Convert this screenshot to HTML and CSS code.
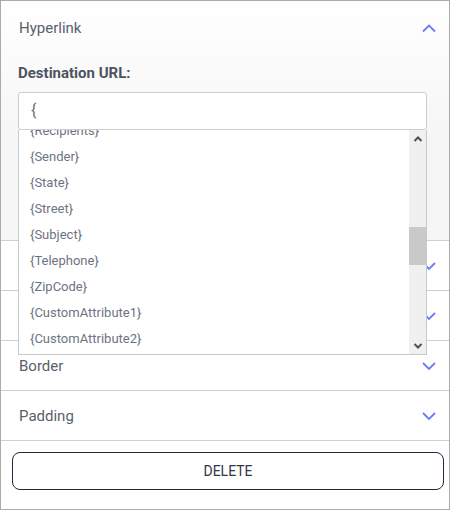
FILE: index.html
```html
<!DOCTYPE html>
<html>
<head>
<meta charset="utf-8">
<link rel="stylesheet" href="styles.css">
</head>
<body>
<div class="panel">
  <section class="sec sec-open">
    <div class="sec-head">
      <span class="sec-title">Hyperlink</span>
      <svg class="chev" width="14" height="14" viewBox="0 0 14 14"><path d="M1 10.5 L7 4.5 L13 10.5" /></svg>
    </div>
    <div class="sec-body">
      <div class="label">Destination URL:</div>
      <div class="field">
        <div class="input">{</div>
        <div class="dropdown">
          <div class="list-view">
            <ul class="items">
              <li>{Recipients}</li>
              <li>{Sender}</li>
              <li>{State}</li>
              <li>{Street}</li>
              <li>{Subject}</li>
              <li>{Telephone}</li>
              <li>{ZipCode}</li>
              <li>{CustomAttribute1}</li>
              <li>{CustomAttribute2}</li>
            </ul>
          </div>
          <div class="scrollbar">
            <div class="sb-btn"><svg width="10" height="8" viewBox="0 0 10 8"><path d="M1.5 6 L5 2.5 L8.5 6" /></svg></div>
            <div class="sb-track"><div class="sb-thumb" style="margin-top:80px;height:38px"></div></div>
            <div class="sb-btn"><svg width="10" height="8" viewBox="0 0 10 8"><path d="M1.5 2 L5 5.5 L8.5 2" /></svg></div>
          </div>
        </div>
      </div>
    </div>
  </section>
  <section class="sec">
    <div class="sec-head">
      <span class="sec-title"></span>
      <svg class="chev" width="14" height="14" viewBox="0 0 14 14"><path d="M1 4 L7 10 L13 4" /></svg>
    </div>
  </section>
  <section class="sec">
    <div class="sec-head">
      <span class="sec-title"></span>
      <svg class="chev" width="14" height="14" viewBox="0 0 14 14"><path d="M1 4 L7 10 L13 4" /></svg>
    </div>
  </section>
  <section class="sec">
    <div class="sec-head">
      <span class="sec-title">Border</span>
      <svg class="chev" width="14" height="14" viewBox="0 0 14 14"><path d="M1 4 L7 10 L13 4" /></svg>
    </div>
  </section>
  <section class="sec">
    <div class="sec-head">
      <span class="sec-title">Padding</span>
      <svg class="chev" width="14" height="14" viewBox="0 0 14 14"><path d="M1 4 L7 10 L13 4" /></svg>
    </div>
  </section>
  <div class="actions">
    <button class="btn-delete">DELETE</button>
  </div>
</div>
</body>
</html>
```

FILE: styles.css
```css
html, body {
  margin: 0;
  padding: 0;
  background: #ffffff;
}

body {
  font-family: Roboto, "Liberation Sans", sans-serif;
}

.panel {
  box-sizing: border-box;
  width: 450px;
  height: 510px;
  border: 1px solid #ababab;
  display: flex;
  flex-direction: column;
  overflow: hidden;
}

.sec {
  border-top: 1px solid #cfcfcf;
  background: #ffffff;
}

.sec-open {
  border-top: none;
  height: 239px;
  background: linear-gradient(to bottom, #ffffff 0%, #f6f6f6 55%, #f6f6f6 100%);
  display: flex;
  flex-direction: column;
}

.sec-head {
  height: 49px;
  display: flex;
  align-items: center;
  justify-content: space-between;
  padding: 0 13px 0 18px;
}

.sec-open .sec-head {
  box-sizing: border-box;
  height: 52px;
  padding-top: 2px;
}

.sec-title {
  font-size: 15px;
  color: #5a5f6c;
}

.chev {
  display: block;
  fill: none;
  stroke: #6d7cf6;
  stroke-width: 1.8;
}

.sec-body {
  padding: 11px 0 0 17px;
}

.label {
  font-size: 15px;
  line-height: 18px;
  font-weight: 700;
  color: #4d5361;
  margin-bottom: 10px;
}

.field {
  position: relative;
  width: 409px;
}

.input {
  box-sizing: border-box;
  height: 38px;
  border: 1px solid #cdcdcd;
  border-radius: 3px;
  background: #ffffff;
  font-size: 16px;
  line-height: 36px;
  padding-left: 12px;
  color: #6a6f7c;
}

.dropdown {
  position: absolute;
  top: 100%;
  left: 0;
  right: 0;
  box-sizing: border-box;
  height: 225px;
  border: 1px solid #c8c8c8;
  border-top: none;
  background: #ffffff;
  display: flex;
  z-index: 5;
}

.list-view {
  flex: 1;
  overflow: hidden;
}

.items {
  list-style: none;
  margin: -12px 0 0 0;
  padding: 0;
}

.items li {
  height: 26px;
  line-height: 26px;
  padding-left: 11px;
  font-size: 13px;
  color: #6e7384;
}

.scrollbar {
  width: 17px;
  background: #f0f0f0;
  display: flex;
  flex-direction: column;
}

.sb-btn {
  height: 17px;
  display: flex;
  align-items: center;
  justify-content: center;
}

.sb-btn svg {
  display: block;
  fill: none;
  stroke: #505050;
  stroke-width: 2;
}

.sb-track {
  flex: 1;
}

.sb-thumb {
  background: #c9c9c9;
}

.actions {
  border-top: 1px solid #cfcfcf;
  padding: 11px 5px 0 11px;
}

.btn-delete {
  display: block;
  box-sizing: border-box;
  width: 100%;
  height: 38px;
  border: 1px solid #23263a;
  border-radius: 8px;
  background: #ffffff;
  font-family: Roboto, "Liberation Sans", sans-serif;
  font-size: 14px;
  color: #33364a;
  padding: 0;
}
```
